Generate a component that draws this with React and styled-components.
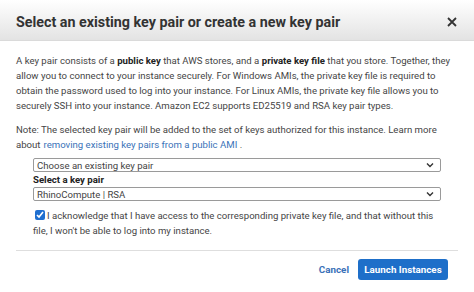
import React from "react";
import styled, { createGlobalStyle } from "styled-components";

const GlobalStyle = createGlobalStyle`
  html, body {
    margin: 0;
    padding: 0;
    background: #ffffff;
  }
  body {
    font-family: Roboto, "Liberation Sans", Arial, sans-serif;
  }
`;

const Dialog = styled.div`
  width: 474px;
  height: 292px;
  display: flex;
  flex-direction: column;
  background: #fff;
  box-sizing: border-box;
`;

const Header = styled.div`
  height: 41px;
  padding: 4px 16px 0 16px;
  display: flex;
  align-items: center;
  justify-content: space-between;
  background: linear-gradient(#ffffff, #e3e3e3);
  border-bottom: 1px solid #dadada;
  box-sizing: border-box;
`;

const Title = styled.h2`
  margin: 0;
  font-size: 14.3px;
  font-weight: 700;
  color: #333;
`;

const Close = styled.button`
  border: 0;
  background: none;
  padding: 0;
  margin-right: 1px;
  display: flex;
  cursor: pointer;
`;

const Body = styled.div`
  padding: 12px 16px 0 16px;
  display: flex;
  flex-direction: column;
  font-size: 9.6px;
  line-height: 15px;
  color: #454545;
`;

const Para = styled.p`
  margin: 0 0 ${(p) => p.$gap || 0}px 0;
  white-space: nowrap;
`;

const Strong = styled.b`
  color: #222;
  font-weight: 700;
`;

const Link = styled.a`
  color: #3a72b8;
  text-decoration: none;
  margin-left: 3px;
`;

const Fields = styled.div`
  margin: 6px 0 0 17px;
  width: 408px;
  display: flex;
  flex-direction: column;
`;

const Select = styled.select`
  width: 100%;
  height: 14px;
  padding: 0 3px;
  font-family: inherit;
  font-size: 9.6px;
  color: #444;
  background: #fff;
  border: 1px solid #9a9a9a;
  border-radius: 2px;
  appearance: none;
  background-image: url("data:image/svg+xml;utf8,<svg xmlns='http://www.w3.org/2000/svg' width='8' height='6'><path d='M1 1.5l3 3 3-3' fill='none' stroke='%23333' stroke-width='1.4'/></svg>");
  background-repeat: no-repeat;
  background-position: right 6px center;
  box-sizing: border-box;
  outline: none;
`;

const Label = styled.label`
  font-weight: 700;
  color: #222;
  line-height: 14px;
  margin-top: 1px;
`;

const Ack = styled.label`
  display: block;
  margin-top: 7px;
  white-space: nowrap;
  color: #454545;
`;

const Check = styled.input`
  width: 10px;
  height: 10px;
  margin: 0 2px 0 2px;
  vertical-align: -1px;
  accent-color: #1f6fd0;
`;

const Footer = styled.div`
  margin: auto 16px 2px 16px;
  border-top: 1px solid #dedede;
  height: 40px;
  display: flex;
  align-items: center;
  justify-content: flex-end;
  gap: 9px;
  padding: 0 10px 2px 0;
  box-sizing: border-box;
`;

const TextButton = styled.button`
  border: 0;
  background: none;
  font-family: inherit;
  font-size: 9.8px;
  font-weight: 700;
  color: #3a72b8;
  padding: 0;
`;

const PrimaryButton = styled.button`
  border: 0;
  background: #1e6fc9;
  color: #fff;
  font-family: inherit;
  font-size: 9.8px;
  font-weight: 700;
  height: 21px;
  width: 90px;
  padding: 0;
  border-radius: 3px;
`;

export default function App() {
  return (
    <Dialog>
      <GlobalStyle />
      <Header>
        <Title>Select an existing key pair or create a new key pair</Title>
        <Close aria-label="Close">
          <svg width="10" height="10" viewBox="0 0 10 10">
            <path d="M1 1l8 8M9 1l-8 8" stroke="#333" strokeWidth="1.8" />
          </svg>
        </Close>
      </Header>
      <Body>
        <Para $gap={9}>
          A key pair consists of a <Strong>public key</Strong> that AWS stores, and a{" "}
          <Strong>private key file</Strong> that you store. Together, they
          <br />
          allow you to connect to your instance securely. For Windows AMIs, the private key
          file is required to
          <br />
          obtain the password used to log into your instance. For Linux AMIs, the private
          key file allows you to
          <br />
          securely SSH into your instance. Amazon EC2 supports ED25519 and RSA key pair
          types.
        </Para>
        <Para>
          Note: The selected key pair will be added to the set of keys authorized for this
          instance. Learn more
          <br />
          about
          <Link href="#">removing existing key pairs from a public AMI</Link> .
        </Para>
        <Fields>
          <Select defaultValue="existing">
            <option value="existing">Choose an existing key pair</option>
          </Select>
          <Label>Select a key pair</Label>
          <Select defaultValue="rhino">
            <option value="rhino">RhinoCompute | RSA</option>
          </Select>
          <Ack>
            <Check type="checkbox" defaultChecked />I acknowledge that I have access to
            the corresponding private key file, and that without this
            <br />
            file, I won't be able to log into my instance.
          </Ack>
        </Fields>
      </Body>
      <Footer>
        <TextButton>Cancel</TextButton>
        <PrimaryButton>Launch Instances</PrimaryButton>
      </Footer>
    </Dialog>
  );
}
